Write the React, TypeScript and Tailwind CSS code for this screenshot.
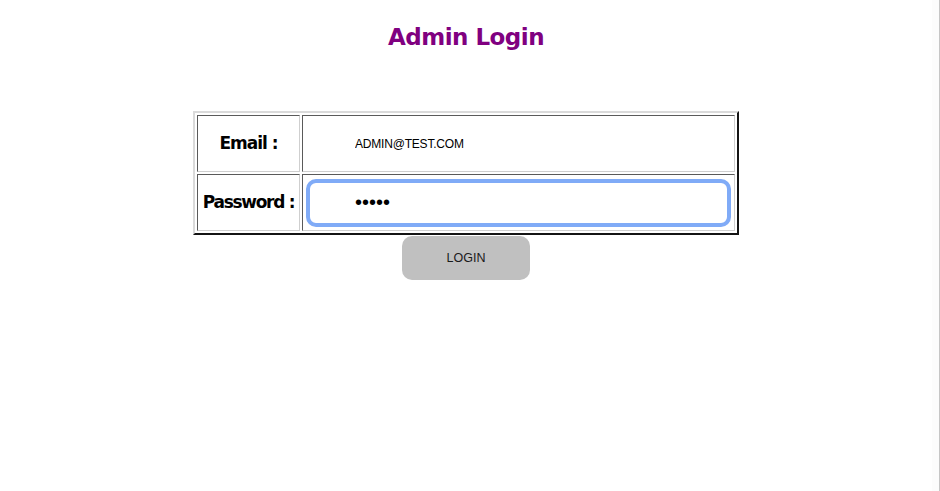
import { useState } from 'react'

export default function App() {
  const [email] = useState('ADMIN@TEST.COM')
  const [password] = useState('12345')

  return (
    <div className="flex min-h-[491px] w-full bg-white">
      <main className="flex flex-1 flex-col items-center pt-[22px]">
        {/* Title */}
        <h2 className="font-['DejaVu_Sans',sans-serif] text-[23px] font-bold leading-[30px] tracking-[-0.5px] text-[#800080]">
          Admin Login
        </h2>

        <form className="mt-[59px] flex flex-col items-center" onSubmit={(e) => e.preventDefault()}>
          <table className="w-[546px] table-fixed border-separate border-spacing-[2px] border-2 border-t-[#dadada] border-l-[#dadada] border-r-[#141414] border-b-[#141414]">
            <colgroup>
              <col className="w-[103px]" />
              <col />
            </colgroup>
            <tbody>
              <tr>
                <td className="h-[57px] border border-t-[#5a5a5a] border-l-[#5a5a5a] border-r-[#cfcfcf] border-b-[#cfcfcf] text-center font-['DejaVu_Sans',sans-serif] text-[17px] font-bold tracking-[-1px] text-black">
                  Email :
                </td>
                <td className="h-[57px] border border-t-[#5a5a5a] border-l-[#5a5a5a] border-r-[#cfcfcf] border-b-[#cfcfcf] p-[3px]">
                  <input
                    type="text"
                    readOnly
                    value={email}
                    className="h-[48px] w-full rounded-[10px] border-[4px] border-transparent bg-white pl-[45px] font-['Liberation_Sans',Arial,sans-serif] text-[12px] tracking-[-0.2px] text-black outline-none"
                  />
                </td>
              </tr>
              <tr>
                <td className="h-[57px] border border-t-[#5a5a5a] border-l-[#5a5a5a] border-r-[#cfcfcf] border-b-[#cfcfcf] text-center font-['DejaVu_Sans',sans-serif] text-[17px] font-bold tracking-[-1.3px] text-black">
                  Password :
                </td>
                <td className="h-[57px] border border-t-[#5a5a5a] border-l-[#5a5a5a] border-r-[#cfcfcf] border-b-[#cfcfcf] p-[3px]">
                  <input
                    type="password"
                    readOnly
                    value={password}
                    className="h-[48px] w-full rounded-[10px] border-[4px] border-[#80abf7] bg-white pl-[45px] font-['Liberation_Sans',Arial,sans-serif] text-[20px] text-black outline-none"
                  />
                </td>
              </tr>
            </tbody>
          </table>

          <button
            type="submit"
            className="mt-px h-[44px] w-[128px] rounded-[10px] bg-[#c0c0c0] font-['Liberation_Sans',Arial,sans-serif] text-[12.5px] text-[#1a1a1a]"
          >
            LOGIN
          </button>
        </form>
      </main>
      <div className="w-[8px] border-r border-[#c6c6c6] bg-[#fcfcfc]" />
    </div>
  )
}
